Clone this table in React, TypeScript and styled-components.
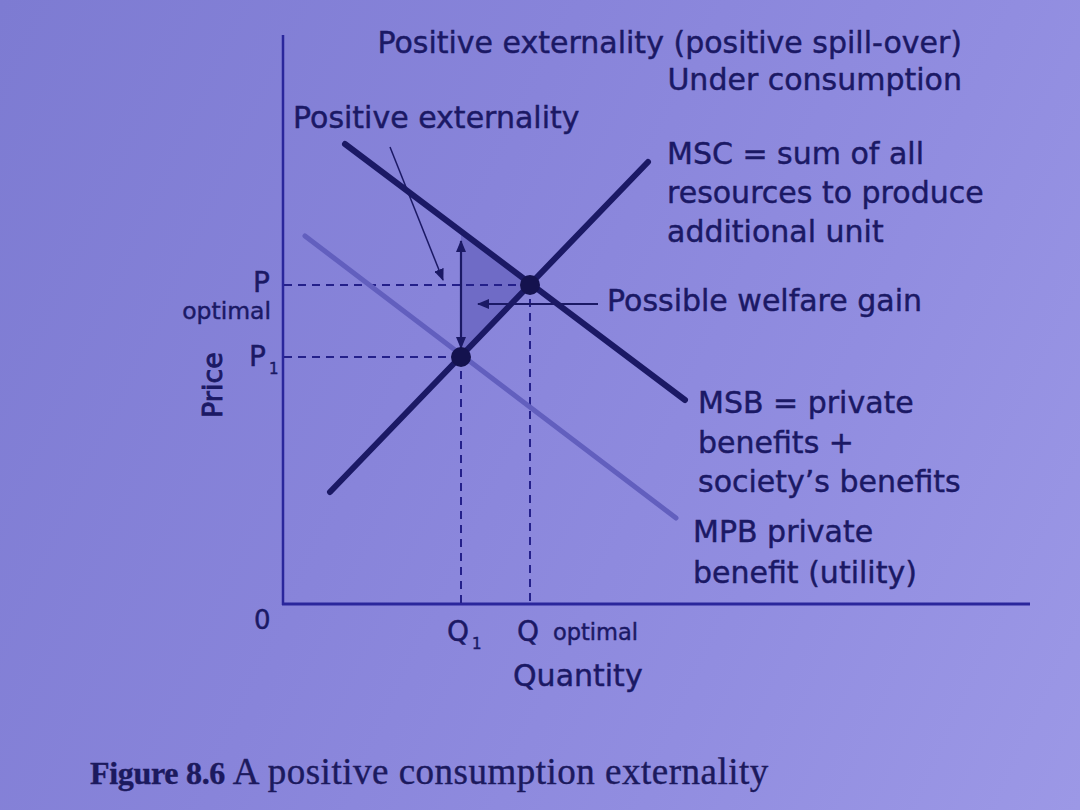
import React from 'react';
import styled, { createGlobalStyle } from 'styled-components';

const GlobalStyle = createGlobalStyle`
	html, body {
		margin: 0;
		padding: 0;
		background: #8985db;
	}
`;

const INK = '#1b1965';
const SANS = `"DejaVu Sans", "Liberation Sans", sans-serif`;

const Page = styled.div`
	width: 1080px;
	height: 810px;
	display: flex;
	flex-direction: column;
	overflow: hidden;
	background: linear-gradient(115deg, #7d7bd2 0%, #8884da 40%, #918de0 70%, #9c98e6 100%);
	color: ${INK};
	font-family: ${SANS};
	-webkit-text-stroke: 0.45px ${INK};
`;

const Figure = styled.div`
	position: relative;
	height: 744px;
	flex: none;
`;

const Chart = styled.svg`
	position: absolute;
	inset: 0;
`;

const Label = styled.div<{ $x: number; $y: number; $size?: number; $lh?: number; $end?: boolean }>`
	position: absolute;
	top: ${p => p.$y}px;
	${p => (p.$end ? `right: ${1080 - p.$x}px; text-align: right;` : `left: ${p.$x}px;`)}
	font-size: ${p => p.$size ?? 30}px;
	line-height: ${p => p.$lh ?? 40}px;
	margin-top: -${p => (p.$lh ?? 40) / 2}px;
	white-space: nowrap;
`;

const Sub = styled.sub`
	font-size: 15px;
	vertical-align: -8px;
	margin-left: 3px;
`;

const Axis = styled.div`
	position: absolute;
	left: 212px;
	top: 385px;
	font-size: 27px;
	-webkit-text-stroke: 0.9px ${INK};
	transform: translate(-50%, -50%) rotate(-90deg);
	white-space: nowrap;
`;

const Caption = styled.div`
	height: 56px;
	line-height: 56px;
	padding-left: 90px;
	font-family: "Liberation Serif", "Times New Roman", serif;
	font-size: 37px;
	letter-spacing: 0.5px;
	color: #1c1a5e;
	-webkit-text-stroke: 0.4px #1c1a5e;
	white-space: nowrap;
`;

const CaptionNo = styled.b`
	font-size: 32px;
	letter-spacing: -0.3px;
`;

// line helpers
const msb = { x1: 345, y1: 144, x2: 685, y2: 400 };
const msc = { x1: 330, y1: 492, x2: 648, y2: 162 };
const mpb = { x1: 305, y1: 236, x2: 676, y2: 518 };
const optimal = { x: 530, y: 285 };
const q1 = { x: 461, y: 357 };
const msbAt = (x: number) => msb.y1 + ((msb.y2 - msb.y1) / (msb.x2 - msb.x1)) * (x - msb.x1);

const ChartDrawing: React.FC = () => (
	<Chart width={1080} height={744} viewBox="0 0 1080 744">
		<defs>
			<marker id="head" viewBox="0 0 12 10" refX="11" refY="5" markerWidth="12" markerHeight="10" markerUnits="userSpaceOnUse" orient="auto-start-reverse">
				<path d="M0 0 L12 5 L0 10 Z" fill={INK} />
			</marker>
		</defs>

		{/* axes */}
		<line x1={283} y1={35} x2={283} y2={605} stroke="#2a269c" strokeWidth={2.5} />
		<line x1={282} y1={604} x2={1030} y2={604} stroke="#2a269c" strokeWidth={3} />

		{/* welfare gain triangle */}
		<polygon points={`${q1.x},${msbAt(q1.x)} ${optimal.x},${optimal.y} ${q1.x},${q1.y}`} fill="#6f6bc6" />

		{/* dashed guides */}
		<g stroke="#24208a" strokeWidth={2} strokeDasharray="8 6">
			<line x1={284} y1={optimal.y} x2={optimal.x} y2={optimal.y} />
			<line x1={284} y1={q1.y} x2={q1.x} y2={q1.y} />
			<line x1={q1.x} y1={q1.y} x2={q1.x} y2={603} />
			<line x1={optimal.x} y1={optimal.y} x2={optimal.x} y2={603} />
		</g>

		{/* curves */}
		<line {...mpb} stroke="#625fbe" strokeWidth={5} strokeLinecap="round" />
		<line {...msb} stroke={INK} strokeWidth={6} strokeLinecap="round" />
		<line {...msc} stroke={INK} strokeWidth={6} strokeLinecap="round" />

		{/* arrows */}
		<line x1={q1.x} y1={241} x2={q1.x} y2={348} stroke={INK} strokeWidth={2.2} markerStart="url(#head)" markerEnd="url(#head)" />
		<line x1={390} y1={147} x2={443} y2={280} stroke={INK} strokeWidth={1.5} markerEnd="url(#head)" />
		<line x1={598} y1={304} x2={478} y2={304} stroke={INK} strokeWidth={2} markerEnd="url(#head)" />

		{/* equilibrium points */}
		<circle cx={optimal.x} cy={optimal.y} r={10} fill="#14124e" />
		<circle cx={q1.x} cy={q1.y} r={10} fill="#14124e" />
	</Chart>
);

export default function App() {
	return (
		<Page>
			<GlobalStyle />
			<Figure>
				<ChartDrawing />

				<Label $x={962} $y={42} $lh={37} $end>
					Positive externality (positive spill-over)
					<br />
					Under consumption
				</Label>
				<Label $x={293} $y={118}>Positive externality</Label>
				<Label $x={667} $y={153} $lh={39}>
					MSC = sum of all
					<br />
					resources to produce
					<br />
					additional unit
				</Label>
				<Label $x={607} $y={301}>Possible welfare gain</Label>
				<Label $x={698} $y={403} $lh={39.5}>
					MSB = private
					<br />
					benefits +
					<br />
					society’s benefits
				</Label>
				<Label $x={693} $y={531} $lh={41}>
					MPB private
					<br />
					benefit (utility)
				</Label>

				<Label $x={270} $y={283} $size={28} $end>P</Label>
				<Label $x={271} $y={311} $size={23.5} $end>optimal</Label>
				<Label $x={249} $y={357} $size={28}>
					P<Sub>1</Sub>
				</Label>
				<Axis>Price</Axis>
				<Label $x={254} $y={620} $size={26}>0</Label>

				<Label $x={447} $y={632} $size={28}>
					Q<Sub>1</Sub>
				</Label>
				<Label $x={517} $y={632} $size={28}>Q</Label>
				<Label $x={553} $y={632} $size={22.5}>optimal</Label>
				<Label $x={513} $y={676}>Quantity</Label>
			</Figure>
			<Caption>
				<CaptionNo>Figure 8.6</CaptionNo> A positive consumption externality
			</Caption>
		</Page>
	);
}
